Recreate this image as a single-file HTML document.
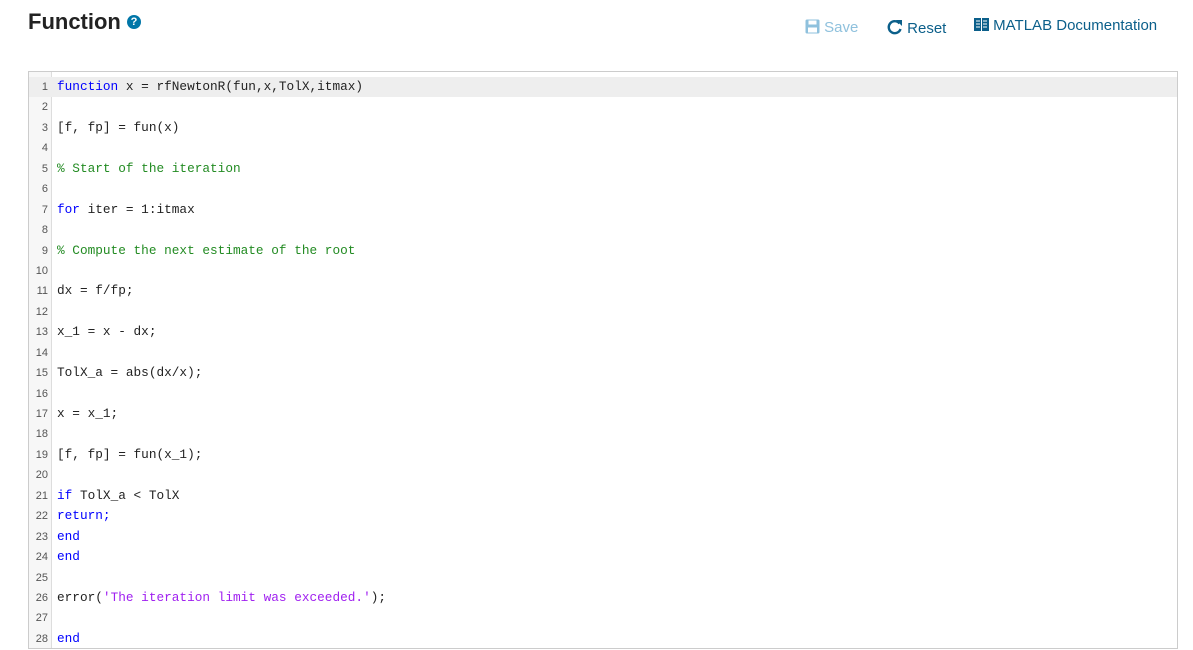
<!DOCTYPE html>
<html><head><style>
body{margin:0;background:#fff;width:1193px;height:650px;overflow:hidden;font-family:"Liberation Sans",sans-serif}
h1{position:absolute;left:28px;top:9px;margin:0;font-size:22px;font-weight:bold;color:#222}
.q{position:absolute;left:127px;top:15px;width:14px;height:14px;border-radius:50%;background:#0076a8;color:#fff;font-size:11px;font-weight:bold;text-align:center;line-height:14px}
.tb{position:absolute;top:19px;font-size:15px;color:#0b5f8a}
.box{position:absolute;left:28px;top:71px;width:1148px;height:576px;border:1px solid #ccc;background:#fff;overflow:hidden}
.gut{position:absolute;left:0;top:0;width:22px;height:100%;background:#f7f7f7;border-right:1px solid #ddd}
.lines{position:absolute;left:0;top:5px;width:100%}
.l{height:20.44px;line-height:20.44px;position:relative;font-family:"Liberation Mono",monospace;font-size:12.75px;color:#222;white-space:pre}
.l .n{position:absolute;left:0;width:19px;text-align:right;font-size:11px;color:#555;font-family:"Liberation Sans",sans-serif}
.l .c{position:absolute;left:28px}
.hl{background:#eee}
.k{color:#0000ff}.m{color:#228b22}.s{color:#a020f0}
</style></head><body>
<h1>Function</h1><div class="q">?</div>
<div class="tb" style="left:805px;color:#8fc1dd"><svg width="15" height="15" viewBox="0 0 15 15" style="vertical-align:-2px"><rect x="0.5" y="0.5" width="14" height="14" rx="1.5" fill="#8fc1dd"/><rect x="3.5" y="1.5" width="8" height="4" fill="#fff"/><rect x="3" y="8.5" width="9" height="5" fill="#fff"/></svg> Save</div>
<div class="tb" style="left:887px"><svg width="16" height="16" viewBox="0 0 16 16" style="vertical-align:-2px"><path d="M12.5 4.5A6 6 0 1 0 13.5 10" fill="none" stroke="#0b5f8a" stroke-width="2.4"/><path d="M9 1h6v6z" fill="#0b5f8a"/></svg> Reset</div>
<div class="tb" style="left:974px;top:17px"><svg width="15" height="13" viewBox="0 0 15 13" style="vertical-align:-1px"><rect x="0" y="0" width="15" height="13" fill="#0b5f8a"/><line x1="7.5" y1="0" x2="7.5" y2="13" stroke="#fff"/><path d="M2 3h4M2 6h4M2 9h4M9 3h4M9 6h4M9 9h4" stroke="#fff" stroke-width="1"/></svg> MATLAB Documentation</div>
<div class="box"><div class="gut"></div><div class="lines">
<div class="l hl"><span class="n">1</span><span class="c"><span class="k">function</span> x = rfNewtonR(fun,x,TolX,itmax)</span></div>
<div class="l"><span class="n">2</span></div>
<div class="l"><span class="n">3</span><span class="c">[f, fp] = fun(x)</span></div>
<div class="l"><span class="n">4</span></div>
<div class="l"><span class="n">5</span><span class="c m">% Start of the iteration</span></div>
<div class="l"><span class="n">6</span></div>
<div class="l"><span class="n">7</span><span class="c"><span class="k">for</span> iter = 1:itmax</span></div>
<div class="l"><span class="n">8</span></div>
<div class="l"><span class="n">9</span><span class="c m">% Compute the next estimate of the root</span></div>
<div class="l"><span class="n">10</span></div>
<div class="l"><span class="n">11</span><span class="c">dx = f/fp;</span></div>
<div class="l"><span class="n">12</span></div>
<div class="l"><span class="n">13</span><span class="c">x_1 = x - dx;</span></div>
<div class="l"><span class="n">14</span></div>
<div class="l"><span class="n">15</span><span class="c">TolX_a = abs(dx/x);</span></div>
<div class="l"><span class="n">16</span></div>
<div class="l"><span class="n">17</span><span class="c">x = x_1;</span></div>
<div class="l"><span class="n">18</span></div>
<div class="l"><span class="n">19</span><span class="c">[f, fp] = fun(x_1);</span></div>
<div class="l"><span class="n">20</span></div>
<div class="l"><span class="n">21</span><span class="c"><span class="k">if</span> TolX_a &lt; TolX</span></div>
<div class="l"><span class="n">22</span><span class="c k">return;</span></div>
<div class="l"><span class="n">23</span><span class="c k">end</span></div>
<div class="l"><span class="n">24</span><span class="c k">end</span></div>
<div class="l"><span class="n">25</span></div>
<div class="l"><span class="n">26</span><span class="c">error(<span class="s">'The iteration limit was exceeded.'</span>);</span></div>
<div class="l"><span class="n">27</span></div>
<div class="l"><span class="n">28</span><span class="c k">end</span></div>
</div></div>
</body></html>
